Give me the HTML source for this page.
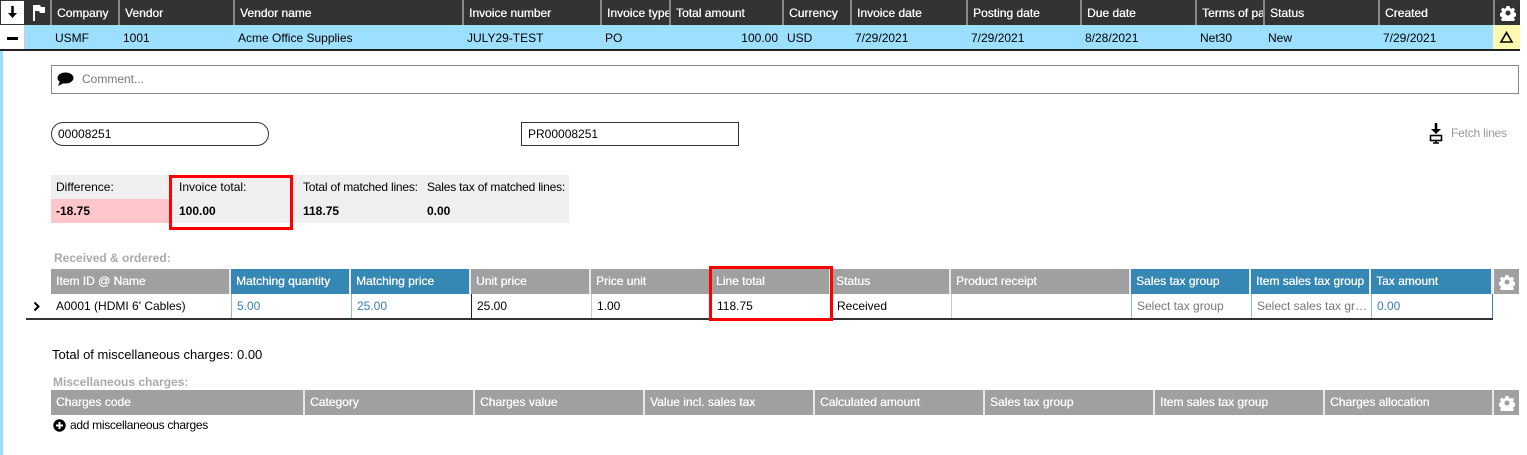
<!DOCTYPE html><html><head><style>
*{box-sizing:border-box;margin:0;padding:0}
body{width:1527px;height:455px;background:#fff;font-family:"Liberation Sans",Arial,sans-serif;font-size:12px;color:#000;position:relative;overflow:hidden}
.a{position:absolute;white-space:nowrap;overflow:hidden}
.h{top:0;height:25px;background:#333;color:#fff;line-height:26px;padding-left:5px;border-left:2px solid #888;text-shadow:0.3px 0 0 #fff}
.r{top:25px;height:25px;background:#9ddfff;line-height:26px;padding-left:5px}
.th{height:25px;line-height:25px;color:#fff;padding-left:5px;border-right:2px solid #e8e8e8;text-shadow:0.3px 0 0 #fff}
.g{background:#a0a0a0}.b{background:#3587b4}
.td{top:294px;height:25px;line-height:25px;padding-left:5px}
.bl{color:#3a7fae}
.gear{background:#a0a0a0;display:flex;align-items:center;justify-content:center}
</style></head><body>
<div class="a" style="left:0;top:50px;width:3px;height:405px;background:#9ddfff"></div>
<!-- header -->
<div class="a" style="left:0;top:0;width:25px;height:25px;background:#fff;border:1px solid #333"><svg width="23" height="23"><path d="M11.5 5v9" stroke="#000" stroke-width="2.5"/><path d="M7 12h9l-4.5 5z"/></svg></div>
<div class="a h" style="left:25px;width:25px;border-left:none;padding:0"><svg width="25" height="25"><path d="M9 5v16" stroke="#fff" stroke-width="2"/><path d="M10 5h5l1 2h4v6h-5l-1-2h-4z" fill="#fff"/></svg></div>
<div class="a h" style="left:50px;width:68px">Company</div>
<div class="a h" style="left:118px;width:115px">Vendor</div>
<div class="a h" style="left:233px;width:229px">Vendor name</div>
<div class="a h" style="left:462px;width:138px">Invoice number</div>
<div class="a h" style="left:600px;width:69px">Invoice type</div>
<div class="a h" style="left:669px;width:113px">Total amount</div>
<div class="a h" style="left:782px;width:68px">Currency</div>
<div class="a h" style="left:850px;width:116px">Invoice date</div>
<div class="a h" style="left:966px;width:114px">Posting date</div>
<div class="a h" style="left:1080px;width:115px">Due date</div>
<div class="a h" style="left:1195px;width:68px">Terms of payment</div>
<div class="a h" style="left:1263px;width:115px">Status</div>
<div class="a h" style="left:1378px;width:115px">Created</div>
<div class="a h" style="left:1493px;width:27px;padding:0;display:flex;align-items:center;justify-content:center"><svg width="16" height="16" viewBox="0 0 16 16"><path d="M8 1l1.5 0 .4 2 1.5.7 1.7-1.1 2 2-1.1 1.7.7 1.5 2 .4v3l-2 .4-.7 1.5 1.1 1.7-2 2-1.7-1.1-1.5.7-.4 2h-3l-.4-2-1.5-.7-1.7 1.1-2-2 1.1-1.7-.7-1.5-2-.4v-3l2-.4.7-1.5-1.1-1.7 2-2 1.7 1.1 1.5-.7.4-2z" fill="#fff"/><circle cx="8" cy="8" r="2.5" fill="#333"/></svg></div>
<!-- row -->
<div class="a" style="left:0;top:25px;width:25px;height:25px;background:#fff;border-right:1px solid #ccc"><div class="a" style="left:7px;top:12px;width:11px;height:3px;background:#000"></div></div>
<div class="a r" style="left:25px;width:25px"></div>
<div class="a r" style="left:50px;width:68px">USMF</div>
<div class="a r" style="left:118px;width:115px">1001</div>
<div class="a r" style="left:233px;width:229px">Acme Office Supplies</div>
<div class="a r" style="left:462px;width:138px">JULY29-TEST</div>
<div class="a r" style="left:600px;width:69px">PO</div>
<div class="a r" style="left:669px;width:113px;text-align:right;padding-right:4px">100.00</div>
<div class="a r" style="left:782px;width:68px">USD</div>
<div class="a r" style="left:850px;width:116px">7/29/2021</div>
<div class="a r" style="left:966px;width:114px">7/29/2021</div>
<div class="a r" style="left:1080px;width:115px">8/28/2021</div>
<div class="a r" style="left:1195px;width:68px">Net30</div>
<div class="a r" style="left:1263px;width:115px">New</div>
<div class="a r" style="left:1378px;width:115px">7/29/2021</div>
<div class="a r" style="left:1493px;width:27px;background:#fff8b0;padding:0"><svg width="27" height="25"><path d="M13.5 7.5L19 17H8z" fill="none" stroke="#000" stroke-width="1.6"/></svg></div>
<div class="a" style="left:0;top:49px;width:1520px;height:2px;background:#222"></div>
<!-- comment -->
<div class="a" style="left:51px;top:65px;width:1468px;height:29px;border:1px solid #888;color:#777;line-height:27px;padding-left:30px">Comment...</div>
<svg class="a" style="left:57px;top:72px" width="17" height="14"><ellipse cx="8.5" cy="6" rx="8" ry="5.5"/><path d="M3 9l-2 5 6-3z"/></svg>
<div class="a" style="left:51px;top:122px;width:218px;height:24px;border:1px solid #333;border-radius:12px;line-height:22px;padding-left:6px">00008251</div>
<div class="a" style="left:521px;top:122px;width:218px;height:24px;border:1px solid #333;line-height:22px;padding-left:6px">PR00008251</div>
<svg class="a" style="left:1428px;top:122px" width="16" height="22"><path d="M8 1v7" stroke="#000" stroke-width="2.5"/><path d="M3 7h10l-5 5z"/><rect x="2.5" y="13.5" width="11" height="5" fill="none" stroke="#000" stroke-width="1.6"/><path d="M8 19v2M5 21h6" stroke="#000" stroke-width="1.5"/></svg>
<div class="a" style="left:1451px;top:125px;color:#999;line-height:16px;letter-spacing:-0.2px">Fetch lines</div>
<!-- summary -->
<div class="a" style="left:51px;top:175px;width:518px;height:48px;background:#efefef"></div>
<div class="a" style="left:51px;top:199px;width:118px;height:24px;background:#ffc7cc"></div>
<div class="a" style="left:56px;top:180px;line-height:14px">Difference:</div>
<div class="a" style="left:56px;top:204px;line-height:14px;font-weight:bold">-18.75</div>
<div class="a" style="left:179px;top:180px;line-height:14px">Invoice total:</div>
<div class="a" style="left:179px;top:204px;line-height:14px;font-weight:bold">100.00</div>
<div class="a" style="left:303px;top:180px;line-height:14px;letter-spacing:-0.2px">Total of matched lines:</div>
<div class="a" style="left:303px;top:204px;line-height:14px;font-weight:bold">118.75</div>
<div class="a" style="left:427px;top:180px;line-height:14px;letter-spacing:-0.2px">Sales tax of matched lines:</div>
<div class="a" style="left:427px;top:204px;line-height:14px;font-weight:bold">0.00</div>
<div class="a" style="left:169px;top:175px;width:124px;height:55px;border:3px solid #f00"></div>
<!-- received -->
<div class="a" style="left:54px;top:251px;color:#aaa;font-weight:bold;line-height:14px">Received &amp; ordered:</div>
<div class="a th g" style="left:51px;top:269px;width:180px">Item ID @ Name</div>
<div class="a th b" style="left:231px;top:269px;width:120px">Matching quantity</div>
<div class="a th b" style="left:351px;top:269px;width:120px">Matching price</div>
<div class="a th g" style="left:471px;top:269px;width:120px">Unit price</div>
<div class="a th g" style="left:591px;top:269px;width:120px">Price unit</div>
<div class="a th g" style="left:711px;top:269px;width:120px">Line total</div>
<div class="a th g" style="left:831px;top:269px;width:120px">Status</div>
<div class="a th g" style="left:951px;top:269px;width:180px">Product receipt</div>
<div class="a th b" style="left:1131px;top:269px;width:120px">Sales tax group</div>
<div class="a th b" style="left:1251px;top:269px;width:120px">Item sales tax group</div>
<div class="a th b" style="left:1371px;top:269px;width:122px">Tax amount</div>
<div class="a gear" style="left:1494px;top:269px;width:25px;height:25px"><svg width="16" height="16" viewBox="0 0 16 16"><path d="M8 1l1.5 0 .4 2 1.5.7 1.7-1.1 2 2-1.1 1.7.7 1.5 2 .4v3l-2 .4-.7 1.5 1.1 1.7-2 2-1.7-1.1-1.5.7-.4 2h-3l-.4-2-1.5-.7-1.7 1.1-2-2 1.1-1.7-.7-1.5-2-.4v-3l2-.4.7-1.5-1.1-1.7 2-2 1.7 1.1 1.5-.7.4-2z" fill="#fff"/><circle cx="8" cy="8" r="2.5" fill="#a0a0a0"/></svg></div>
<svg class="a" style="left:33px;top:301px" width="8" height="11"><path d="M1.5 1.5l4 4-4 4" fill="none" stroke="#000" stroke-width="2"/></svg>
<div class="a td" style="left:51px;width:180px">A0001 (HDMI 6' Cables)</div>
<div class="a td bl" style="left:231px;width:120px;border-left:1px solid #8cbcd8">5.00</div>
<div class="a td bl" style="left:351px;width:120px;border-left:1px solid #8cbcd8">25.00</div>
<div class="a td" style="left:471px;width:120px;border-left:1px solid #222">25.00</div>
<div class="a td" style="left:591px;width:120px;border-left:1px solid #ccc">1.00</div>
<div class="a td" style="left:711px;width:120px;border-left:1px solid #ccc">118.75</div>
<div class="a td" style="left:831px;width:120px;border-left:1px solid #ccc">Received</div>
<div class="a td" style="left:951px;width:180px;border-left:1px solid #ccc"></div>
<div class="a td" style="left:1131px;width:120px;color:#777;border-left:1px solid #8cbcd8">Select tax group</div>
<div class="a td" style="left:1251px;width:120px;color:#777;border-left:1px solid #8cbcd8">Select sales tax gr…</div>
<div class="a td bl" style="left:1371px;width:122px;border-left:1px solid #8cbcd8;border-right:1px solid #3587b4">0.00</div>
<div class="a" style="left:26px;top:318px;width:1467px;height:2px;background:#333"></div>
<div class="a" style="left:709px;top:266px;width:124px;height:55px;border:3px solid #f00"></div>
<!-- misc -->
<div class="a" style="left:52px;top:347px;font-size:13px;line-height:16px">Total of miscellaneous charges: 0.00</div>
<div class="a" style="left:53px;top:375px;color:#aaa;font-weight:bold;line-height:14px">Miscellaneous charges:</div>
<div class="a th g" style="left:51px;top:390px;width:254px">Charges code</div>
<div class="a th g" style="left:305px;top:390px;width:170px">Category</div>
<div class="a th g" style="left:475px;top:390px;width:170px">Charges value</div>
<div class="a th g" style="left:645px;top:390px;width:170px">Value incl. sales tax</div>
<div class="a th g" style="left:815px;top:390px;width:170px">Calculated amount</div>
<div class="a th g" style="left:985px;top:390px;width:170px">Sales tax group</div>
<div class="a th g" style="left:1155px;top:390px;width:170px">Item sales tax group</div>
<div class="a th g" style="left:1325px;top:390px;width:169px">Charges allocation</div>
<div class="a gear" style="left:1494px;top:390px;width:25px;height:25px"><svg width="16" height="16" viewBox="0 0 16 16"><path d="M8 1l1.5 0 .4 2 1.5.7 1.7-1.1 2 2-1.1 1.7.7 1.5 2 .4v3l-2 .4-.7 1.5 1.1 1.7-2 2-1.7-1.1-1.5.7-.4 2h-3l-.4-2-1.5-.7-1.7 1.1-2-2 1.1-1.7-.7-1.5-2-.4v-3l2-.4.7-1.5-1.1-1.7 2-2 1.7 1.1 1.5-.7.4-2z" fill="#fff"/><circle cx="8" cy="8" r="2.5" fill="#a0a0a0"/></svg></div>
<svg class="a" style="left:53px;top:419px" width="13" height="13"><circle cx="6.5" cy="6.5" r="6.2"/><path d="M6.5 3v7M3 6.5h7" stroke="#fff" stroke-width="2"/></svg>
<div class="a" style="left:70px;top:418px;line-height:15px;letter-spacing:-0.3px">add miscellaneous charges</div>
</body></html>
